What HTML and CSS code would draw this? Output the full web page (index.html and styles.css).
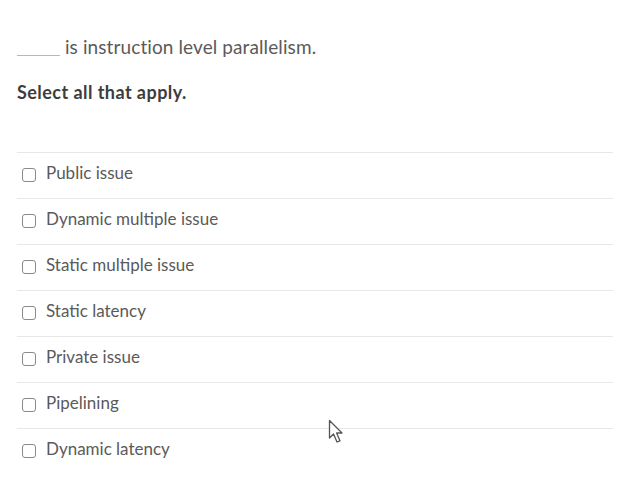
FILE: index.html
```html
<!DOCTYPE html>
<html>
<head>
<meta charset="utf-8">
<link rel="stylesheet" href="styles.css">
</head>
<body>
<div class="page">
  <p class="question"><span class="blank"></span> is instruction level parallelism.</p>
  <p class="instruct">Select all that apply.</p>
  <ul class="options">
    <li class="option"><span class="box"></span><span class="label">Public issue</span></li>
    <li class="option"><span class="box"></span><span class="label">Dynamic multiple issue</span></li>
    <li class="option"><span class="box"></span><span class="label">Static multiple issue</span></li>
    <li class="option"><span class="box"></span><span class="label">Static latency</span></li>
    <li class="option"><span class="box"></span><span class="label">Private issue</span></li>
    <li class="option"><span class="box"></span><span class="label">Pipelining</span></li>
    <li class="option"><span class="box"></span><span class="label">Dynamic latency</span></li>
  </ul>
  <svg class="cursor" width="18" height="26" viewBox="0 0 18 26">
    <path d="M1.5 1.5 L1.5 19 L5.5 15 L9 23 L12 21.8 L8.6 14 L14 14 Z" fill="#fff" stroke="#555" stroke-width="1.3" stroke-linejoin="round"/>
  </svg>
</div>
</body>
</html>
```

FILE: styles.css
```css
html, body {
  margin: 0;
  padding: 0;
  background: #fff;
}
.page {
  position: relative;
  width: 635px;
  height: 480px;
  padding: 0 22px 0 17px;
  box-sizing: border-box;
  font-family: Lato, "Open Sans", sans-serif;
  color: #555;
}
.question {
  margin: 0;
  padding-top: 35px;
  font-size: 19px;
  line-height: 24px;
  letter-spacing: 0.1px;
  color: #5a5a5a;
}
.blank {
  display: inline-block;
  width: 43px;
  height: 1px;
  border-bottom: 1px solid #b8b8b8;
  vertical-align: -2px;
}
.instruct {
  margin: 21px 0 0;
  font-size: 18px;
  line-height: 24px;
  letter-spacing: 0.45px;
  font-weight: bold;
  color: #3d3d3d;
}
.options {
  list-style: none;
  margin: 48px 0 0;
  padding: 0;
}
.option {
  display: flex;
  align-items: flex-start;
  height: 35px;
  padding-top: 10px;
  border-top: 1px solid #e8e8e8;
  padding-left: 5px;
}
.box {
  width: 12px;
  height: 12px;
  margin-top: 5px;
  border: 1px solid #8a8a8a;
  border-radius: 3px;
  margin-right: 10px;
  flex-shrink: 0;
}
.label {
  font-size: 17px;
  line-height: 20px;
  color: #5a5a5a;
}
.cursor {
  position: absolute;
  left: 328px;
  top: 419px;
}
```
